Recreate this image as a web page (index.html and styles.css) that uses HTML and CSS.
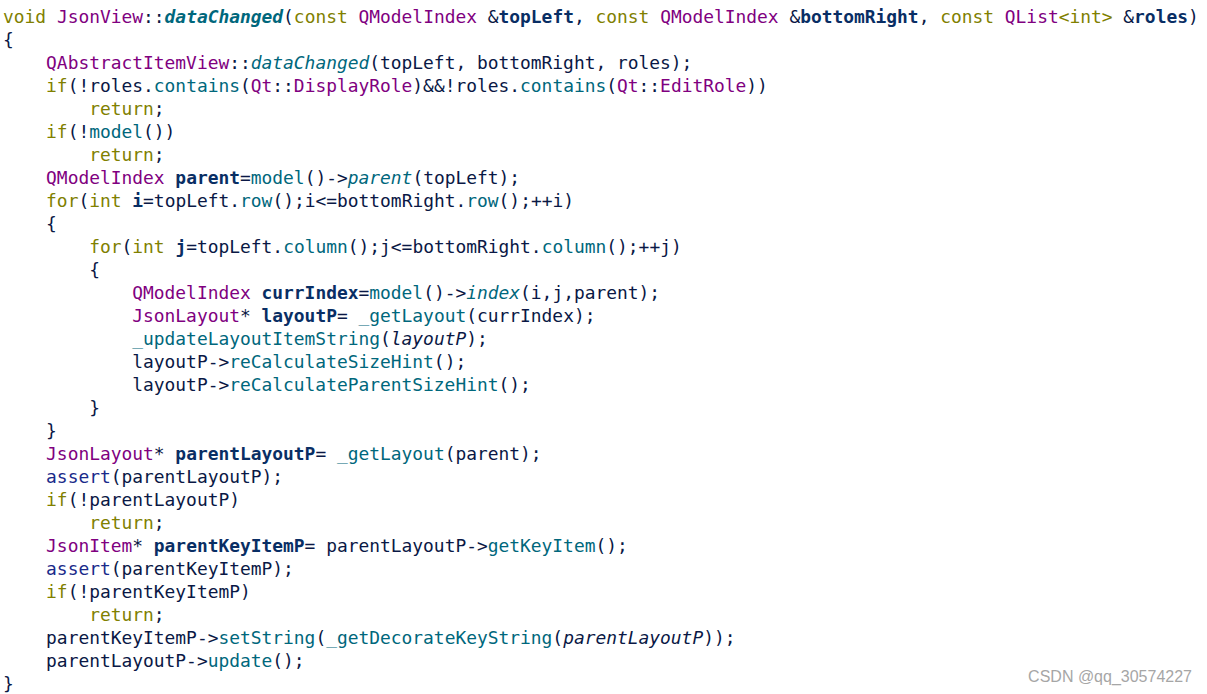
FILE: index.html
```html
<!DOCTYPE html>
<html>
<head>
<meta charset="utf-8">
<link rel="stylesheet" href="styles.css">
</head>
<body>
<main class="page">
<pre class="code"><span class="k">void</span> <span class="t">JsonView</span>::<span class="fd">dataChanged</span>(<span class="k">const</span> <span class="t">QModelIndex</span> &amp;<span class="v">topLeft</span>, <span class="k">const</span> <span class="t">QModelIndex</span> &amp;<span class="v">bottomRight</span>, <span class="k">const</span> <span class="t">QList</span><span class="k">&lt;int&gt;</span> &amp;<span class="v">roles</span>)
{
    <span class="t">QAbstractItemView</span>::<span class="fi">dataChanged</span>(topLeft, bottomRight, roles);
    <span class="k">if</span>(!roles.<span class="f">contains</span>(<span class="t">Qt</span>::<span class="t">DisplayRole</span>)&amp;&amp;!roles.<span class="f">contains</span>(<span class="t">Qt</span>::<span class="t">EditRole</span>))
        <span class="k">return</span>;
    <span class="k">if</span>(!<span class="f">model</span>())
        <span class="k">return</span>;
    <span class="t">QModelIndex</span> <span class="v">parent</span>=<span class="f">model</span>()-&gt;<span class="fi">parent</span>(topLeft);
    <span class="k">for</span>(<span class="k">int</span> <span class="v">i</span>=topLeft.<span class="f">row</span>();i&lt;=bottomRight.<span class="f">row</span>();++i)
    {
        <span class="k">for</span>(<span class="k">int</span> <span class="v">j</span>=topLeft.<span class="f">column</span>();j&lt;=bottomRight.<span class="f">column</span>();++j)
        {
            <span class="t">QModelIndex</span> <span class="v">currIndex</span>=<span class="f">model</span>()-&gt;<span class="fi">index</span>(i,j,parent);
            <span class="t">JsonLayout</span>* <span class="v">layoutP</span>= <span class="f">_getLayout</span>(currIndex);
            <span class="f">_updateLayoutItemString</span>(<span class="it">layoutP</span>);
            layoutP-&gt;<span class="f">reCalculateSizeHint</span>();
            layoutP-&gt;<span class="f">reCalculateParentSizeHint</span>();
        }
    }
    <span class="t">JsonLayout</span>* <span class="v">parentLayoutP</span>= <span class="f">_getLayout</span>(parent);
    <span class="m">assert</span>(parentLayoutP);
    <span class="k">if</span>(!parentLayoutP)
        <span class="k">return</span>;
    <span class="t">JsonItem</span>* <span class="v">parentKeyItemP</span>= parentLayoutP-&gt;<span class="f">getKeyItem</span>();
    <span class="m">assert</span>(parentKeyItemP);
    <span class="k">if</span>(!parentKeyItemP)
        <span class="k">return</span>;
    parentKeyItemP-&gt;<span class="f">setString</span>(<span class="f">_getDecorateKeyString</span>(<span class="it">parentLayoutP</span>));
    parentLayoutP-&gt;<span class="f">update</span>();
}</pre>
<div class="watermark">CSDN @qq_30574227</div>
</main>
</body>
</html>
```
FILE: styles.css
```css
html, body {
  margin: 0;
  padding: 0;
  background: #ffffff;
}
.page {
  position: relative;
  width: 1207px;
  height: 694px;
  overflow: hidden;
}
.code {
  margin: 0;
  padding: 5px 0 0 3px;
  font-family: "DejaVu Sans Mono", "Liberation Mono", monospace;
  font-size: 17.9px;
  line-height: 23px;
  color: #0a1845;
  white-space: pre;
}
.k { color: #808000; }
.t { color: #800080; }
.f { color: #00677c; }
.fi { color: #00677c; font-style: italic; }
.fd { color: #00677c; font-style: italic; font-weight: bold; }
.v { color: #092e64; font-weight: bold; }
.it { font-style: italic; }
.m { color: #1a2a8a; }
.watermark {
  position: absolute;
  right: 15px;
  bottom: 8px;
  font-family: "Liberation Sans", Arial, sans-serif;
  font-size: 16px;
  color: #a6a6a6;
}
```
